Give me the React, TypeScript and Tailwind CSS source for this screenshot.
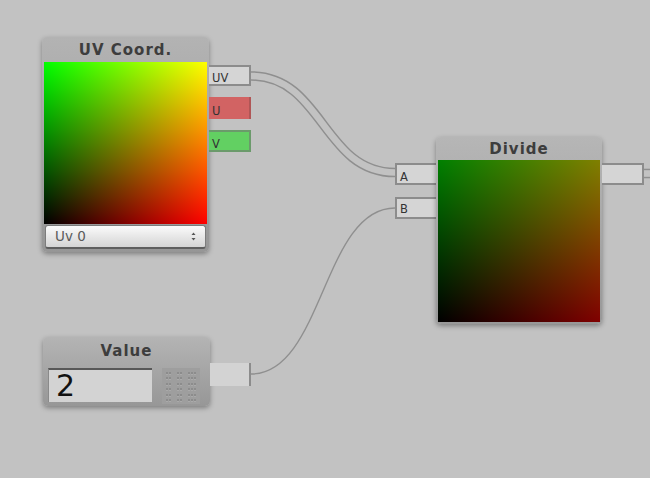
import React from "react";

const titleCls =
  "flex items-center justify-center pt-[2px] font-['DejaVu_Sans',sans-serif] font-bold text-[15px] tracking-[1px] text-[#3d3d3d] leading-none";

const nodeCls =
  "flex flex-col rounded-[5px] bg-linear-to-b shadow-[0_2px_5px_rgba(0,0,0,0.35)]";

function Socket({ label, className }: { label?: string; className: string }) {
  return (
    <div
      className={`flex items-end pl-[3px] font-['DejaVu_Sans',sans-serif] text-[11.5px] leading-none text-[#333] ${className}`}
    >
      {label}
    </div>
  );
}

function GridIcon() {
  const cols = [4, 7, 15, 18, 26, 29, 32];
  const rows = [4, 9, 15, 20, 26, 31];
  return (
    <svg width="38" height="36" viewBox="0 0 38 36" className="shrink-0">
      <rect x="0" y="0" width="38" height="36" fill="#9e9e9e" />
      {rows.map((y) =>
        cols.map((x) => (
          <g key={`${x}-${y}`}>
            <rect x={x} y={y} width="2" height="2" fill="#8c8c8c" />
            <rect x={x} y={y + 2} width="2" height="1" fill="#aaaaaa" />
          </g>
        )),
      )}
    </svg>
  );
}

export default function App() {
  return (
    <div className="relative w-[650px] h-[478px] overflow-hidden bg-[#c2c2c2]">
      {/* wires */}
      <svg
        className="absolute inset-0"
        width="650"
        height="478"
        viewBox="0 0 650 478"
      >
        <path
          d="M251 76 C323 76 323 172.5 395 172.5"
          fill="none"
          stroke="#8f8f8f"
          strokeWidth="9.6"
        />
        <path
          d="M251 76 C323 76 323 172.5 395 172.5"
          fill="none"
          stroke="#c2c2c2"
          strokeWidth="6.6"
        />
        <path
          d="M251 374 C323 374 323 208 395 208"
          fill="none"
          stroke="#8f8f8f"
          strokeWidth="1.4"
        />
        <path d="M644 173.5 L652 173.5" fill="none" stroke="#8f8f8f" strokeWidth="9.6" />
        <path d="M644 173.5 L652 173.5" fill="none" stroke="#c2c2c2" strokeWidth="6.6" />
      </svg>

      {/* UV Coord. node */}
      <div className="absolute left-[42px] top-[37px] flex items-start">
        <div className={`w-[167px] h-[215px] from-[#b3b3b3] to-[#969696] ${nodeCls}`}>
          <div className={`h-[25px] ${titleCls}`}>UV Coord.</div>
          <div className="mx-[2px] h-[162px] bg-[image:linear-gradient(to_right,#000,#f00),linear-gradient(to_bottom,#0f0,#000)] bg-blend-screen" />
          <div className="mt-[1px] mx-[3px] h-[24px] flex items-center justify-between px-[9px] rounded-[3px] border border-[#7c7c7c] border-b-2 border-b-[#5e5e5e] bg-linear-to-b from-[#fbfbfb] to-[#d4d4d4] font-['DejaVu_Sans',sans-serif] text-[13.5px] text-[#5a5a5a] leading-none">
            <span>Uv 0</span>
            <svg width="5" height="9" viewBox="0 0 5 9">
              <path d="M2.5 0.5 L4.5 3 L0.5 3 Z" fill="#555" />
              <path d="M0.5 6 L4.5 6 L2.5 8.5 Z" fill="#555" />
            </svg>
          </div>
        </div>
        <div className="pt-[28px] flex flex-col gap-[11px]">
          <Socket
            label="UV"
            className="w-[42px] h-[21px] bg-[#d5d5d5] border-y-2 border-r-2 border-[#8c8c8c]"
          />
          <Socket
            label="U"
            className="w-[42px] h-[22px] pb-[2px] bg-[#d26363] border-r-2 border-[#b05656]"
          />
          <Socket
            label="V"
            className="w-[42px] h-[22px] bg-[#62d062] border-y-2 border-r-2 border-[#6b9a6b]"
          />
        </div>
      </div>

      {/* Divide node */}
      <div className="absolute left-[395px] top-[137px] flex items-start">
        <div className="pt-[26px] flex flex-col gap-[12px]">
          <Socket
            label="A"
            className="w-[41px] h-[22px] bg-[#d5d5d5] border-y-2 border-l-2 border-[#8c8c8c]"
          />
          <Socket
            label="B"
            className="w-[41px] h-[22px] pb-[2px] bg-[#d5d5d5] border-y-2 border-l-2 border-[#8c8c8c]"
          />
        </div>
        <div className={`w-[166px] h-[187px] from-[#b6b6b6] to-[#989898] ${nodeCls}`}>
          <div className={`h-[23px] ${titleCls}`}>Divide</div>
          <div className="mx-[2px] h-[162px] bg-[image:linear-gradient(to_right,#000,#800000),linear-gradient(to_bottom,#008000,#000)] bg-blend-screen" />
        </div>
        <div className="pt-[26px]">
          <Socket className="w-[42px] h-[22px] bg-[#d5d5d5] border-y-2 border-r-2 border-[#8c8c8c]" />
        </div>
      </div>

      {/* Value node */}
      <div className="absolute left-[43px] top-[337px] flex items-start">
        <div className={`w-[167px] h-[69px] from-[#b4b4b4] to-[#979797] ${nodeCls}`}>
          <div className={`h-[27px] ${titleCls}`}>Value</div>
          <div className="mt-[4px] flex items-start px-[5px] gap-[10px]">
            <div className="w-[104px] h-[34px] flex items-center pl-[7px] bg-[#d3d3d3] border-t-2 border-t-[#585858] border-l border-l-[#8a8a8a] font-['DejaVu_Sans',sans-serif] text-[30px] leading-none text-[#111]">
              2
            </div>
            <GridIcon />
          </div>
        </div>
        <div className="pt-[26px]">
          <Socket className="w-[41px] h-[23px] bg-[#d3d3d3] border-r-2 border-[#8c8c8c]" />
        </div>
      </div>
    </div>
  );
}
